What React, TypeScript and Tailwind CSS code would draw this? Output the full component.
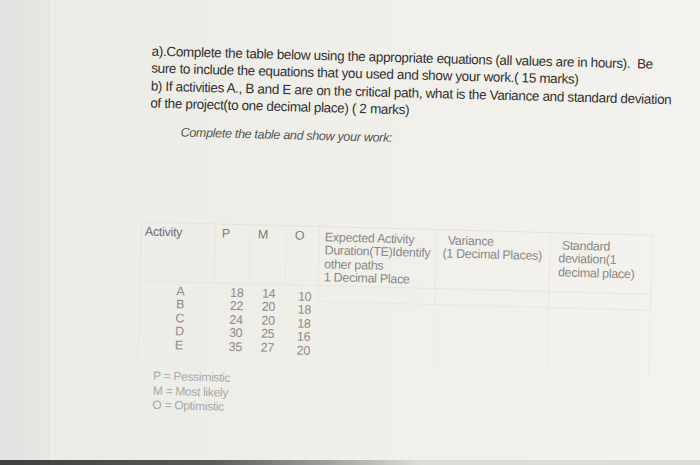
const rows = [
  { act: "A", p: 18, m: 14, o: 10 },
  { act: "B", p: 22, m: 20, o: 18 },
  { act: "C", p: 24, m: 20, o: 18 },
  { act: "D", p: 30, m: 25, o: 16 },
  { act: "E", p: 35, m: 27, o: 20 },
]

export default function App() {
  return (
    <div className="w-[700px] h-[465px] overflow-hidden flex flex-col bg-[#eeeee9] font-['Liberation_Sans',Arial,sans-serif]">
      <div className="flex flex-1 min-h-0">
        {/* left edge of the monitor */}
        <div className="w-[52px] bg-gradient-to-r from-[#e2e3e0] to-[#e7e8e4] border-r border-[#f4f4f1]" />

        <div className="flex-1 bg-gradient-to-r from-[#ecece7] via-[#f0efea] to-[#f3f2ee]">
          <div className="origin-top-left rotate-[1.5deg] pt-[40px] pl-[101px]">
            {/* question */}
            <div className="text-[13.5px] leading-[17.3px] text-[#303030] tracking-[-0.35px] whitespace-nowrap">
              <p>a).Complete the table below using the appropriate equations (all values are in hours).&nbsp; Be</p>
              <p>sure to include the equations that you used and show your work.( 15 marks)</p>
              <p>b) If activities A., B and E are on the critical path, what is the Variance and standard deviation</p>
              <p>of the project(to one decimal place) ( 2 marks)</p>
            </div>

            <p className="mt-[11px] ml-[31px] text-[12.5px] italic text-[#555] tracking-[-0.3px]">
              Complete the table and show your work:
            </p>

            {/* table */}
            <div className="mt-[80px] -ml-[6px] w-[512px] text-[12.5px] leading-[13.5px] text-[#7d7d7d] tracking-[-0.3px]">
              <div className="grid grid-cols-[74px_35px_36px_33px_117px_114px_103px] border-t border-[#e4e4de]">
                {/* header */}
                <div className="h-[55px] pl-[3px] pt-[3px] border-l border-[#e4e4de] text-[#6e6e6e]">Activity</div>
                <div className="pl-[6px] pt-[3px] border-l border-[#e8e8e2]">P</div>
                <div className="pl-[7px] pt-[3px] border-l border-[#e8e8e2]">M</div>
                <div className="pl-[8px] pt-[3px] border-l border-[#e8e8e2]">O</div>
                <div className="pl-[5px] pt-[4px] border-l border-[#e8e8e2] text-[#888]">
                  Expected Activity
                  <br />
                  Duration(TE)Identify
                  <br />
                  other paths
                  <br />1 Decimal Place
                </div>
                <div className="pl-[6px] pt-[4px] border-l border-[#e8e8e2] text-[#888]">
                  <span className="pl-[5px]">Variance</span>
                  <br />
                  (1 Decimal Places)
                </div>
                <div className="pl-[8px] pt-[6px] border-x border-[#e8e8e2] text-[#888]">
                  <span className="pl-[3px]">Standard</span>
                  <br />
                  deviation(1
                  <br />
                  decimal place)
                </div>

                {/* data */}
                <div className="col-span-4 grid grid-cols-[74px_35px_36px_33px] border-t border-l border-[#e6e6e0] pt-[3px] pb-[9px] text-[#8c8c8c]">
                  <div className="flex flex-col items-center pl-[6px]">
                    {rows.map((r) => (
                      <span key={r.act}>{r.act}</span>
                    ))}
                  </div>
                  <div className="flex flex-col items-end pr-[6px]">
                    {rows.map((r) => (
                      <span key={r.act}>{r.p}</span>
                    ))}
                  </div>
                  <div className="flex flex-col items-end pr-[10px]">
                    {rows.map((r) => (
                      <span key={r.act}>{r.m}</span>
                    ))}
                  </div>
                  <div className="flex flex-col items-end pr-[7px] pt-[2px]">
                    {rows.map((r) => (
                      <span key={r.act}>{r.o}</span>
                    ))}
                  </div>
                </div>
                <div className="col-span-3 grid grid-cols-[117px_114px_103px] grid-rows-[16px_1fr] border-t border-[#e6e6e0]">
                  <div className="border-l border-b border-[#e8e8e2]" />
                  <div className="border-l border-b border-[#e8e8e2]" />
                  <div className="border-x border-b border-[#e8e8e2]" />
                  <div className="border-l border-[#ececE6]" />
                  <div className="border-l border-[#ececE6]" />
                  <div className="border-x border-[#ececE6]" />
                </div>
              </div>
            </div>

            {/* legend */}
            <div className="mt-[6px] ml-[10px] text-[12px] leading-[14.5px] text-[#a8a8a8] tracking-[-0.3px]">
              <p>P = Pessimistic</p>
              <p>M = Most likely</p>
              <p>O = Optimistic</p>
            </div>
          </div>
        </div>
      </div>

      {/* monitor bezel at the bottom */}
      <div className="h-[5px] bg-gradient-to-r from-[#3f3f3f] via-[#5a5a5a] via-30% to-[#dcdcd8] to-60%" />
    </div>
  )
}
